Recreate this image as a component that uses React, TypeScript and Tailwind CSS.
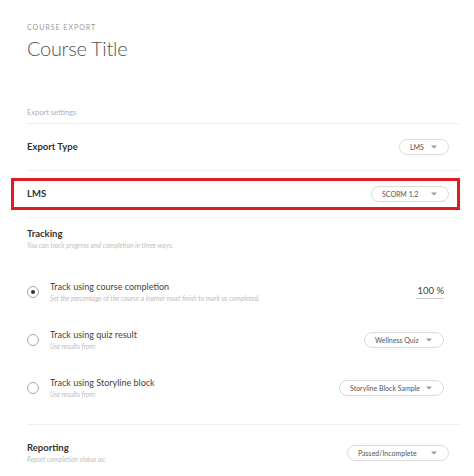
import React from 'react';

// ─── Pill select ──────────────────────────────────────────────
function Caret() {
  return (
    <svg width="6" height="4" viewBox="0 0 6 4" className="shrink-0">
      <path d="M0 0.5 L6 0.5 L3 3.5 Z" fill="#9a9a9a" />
    </svg>
  );
}

function Pill({ label, className = '' }: { label: string; className?: string }) {
  return (
    <div className={`flex h-[16px] items-center justify-between rounded-full border border-[#dcdcdc] bg-white pl-[10px] pr-[11px] text-[7px] text-[#555] ${className}`}>
      <span>{label}</span>
      <Caret />
    </div>
  );
}

// ─── Radio ────────────────────────────────────────────────────
function Radio({ checked }: { checked?: boolean }) {
  return (
    <div className="flex h-[12px] w-[12px] shrink-0 items-center justify-center rounded-full border border-[#a8a8a8] bg-white">
      {checked && <div className="h-[4px] w-[4px] rounded-full bg-[#333]" />}
    </div>
  );
}

function Option({ title, sub, checked, right }: { title: string; sub: string; checked?: boolean; right: React.ReactNode }) {
  return (
    <div className="flex h-[48px] items-center pr-[16px]">
      <div className="flex w-[23px] items-center">
        <Radio checked={checked} />
      </div>
      <div className="flex flex-1 flex-col">
        <p className="text-[9px] leading-[12px] text-[#444]">{title}</p>
        <p className="mt-[1px] text-[6.7px] italic leading-[9px] text-[#bdbdbd]">{sub}</p>
      </div>
      {right}
    </div>
  );
}

export default function App() {
  return (
    <div className="min-h-[476px] w-[474px] bg-white font-['Lato','Noto_Sans',sans-serif]">
      <div className="ml-[27px] w-[433px] pt-[23px]">
        <p className="text-[7px] uppercase leading-[9px] tracking-[1px] text-[#9a9a9a]">Course Export</p>
        <h1 className="mt-[3px] text-[20px] font-light leading-[26px] tracking-[-0.3px] text-[#555]">Course Title</h1>

        <p className="mt-[47px] text-[7.5px] leading-[10px] text-[#b0b0b0]">Export settings</p>
        <div className="mt-[5px] border-t border-[#f0f0f0]" />

        <div className="flex h-[46px] items-center justify-between pr-[11px]">
          <p className="text-[9.5px] font-bold text-[#333]">Export Type</p>
          <Pill label="LMS" className="w-[50px]" />
        </div>
        <div className="border-t border-[#f0f0f0]" />

        <div className="-ml-[16px] mb-[7px] mt-[7px] flex h-[32px] items-center justify-between border-[3px] border-[#e11b22] pl-[13px] pr-[8px]">
          <p className="text-[9.5px] font-bold text-[#333]">LMS</p>
          <Pill label="SCORM 1.2" className="w-[78px]" />
        </div>
        <div className="border-t border-[#f3f3f3]" />

        <div className="pt-[10px]">
          <p className="text-[9.5px] font-bold leading-[12px] text-[#333]">Tracking</p>
          <p className="mt-[1px] text-[6.7px] italic leading-[9px] text-[#c0c0c0]">You can track progress and completion in three ways:</p>
        </div>

        <div className="mt-[18px]">
          <Option
            checked
            title="Track using course completion"
            sub="Set the percentage of the course a learner must finish to mark as completed."
            right={
              <div className="flex w-[28px] flex-col items-end border-b border-[#cfcfcf] pb-[1px]">
                <span className="text-[9.5px] leading-[12px] text-[#444]">100 %</span>
              </div>
            }
          />
          <Option title="Track using quiz result" sub="Use results from:" right={<Pill label="Wellness Quiz" className="w-[80px]" />} />
          <Option title="Track using Storyline block" sub="Use results from:" right={<Pill label="Storyline Block Sample" className="w-[105px]" />} />
        </div>

        <div className="mt-[12px] border-t border-[#f0f0f0]" />

        <div className="flex items-center justify-between pr-[11px] pt-[17px]">
          <div>
            <p className="text-[9.5px] font-bold leading-[12px] text-[#333]">Reporting</p>
            <p className="mt-[1px] text-[6.7px] italic leading-[9px] text-[#c0c0c0]">Report completion status as:</p>
          </div>
          <Pill label="Passed/Incomplete" className="w-[102px]" />
        </div>
      </div>
    </div>
  );
}
